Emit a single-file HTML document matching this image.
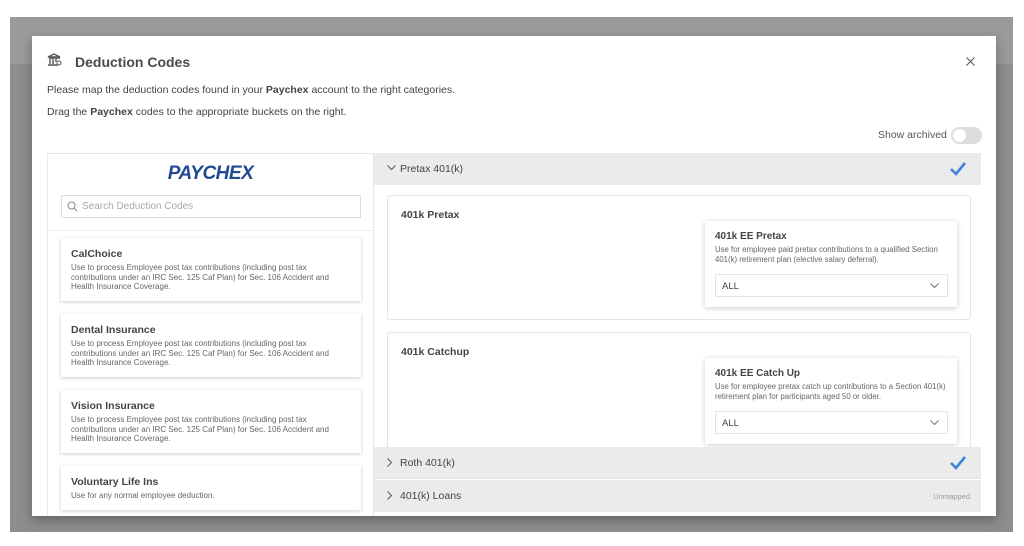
<!DOCTYPE html>
<html><head><style>
*{box-sizing:border-box;margin:0;padding:0}
body{width:1024px;height:546px;background:#fff;font-family:"Liberation Sans",sans-serif;position:relative;overflow:hidden;color:#333}
.bd{position:absolute;left:10px;top:17px;width:1003px;height:515px;background:#8d8d8d}
.bd .h{position:absolute;left:0;top:0;width:100%;height:47px;background:#9a9a9a}
.modal{position:absolute;left:32px;top:36px;width:964px;height:480px;background:#fff;overflow:hidden;box-shadow:0 4px 10px rgba(0,0,0,.3)}
.t{position:absolute;left:43px;top:18px;font-size:14px;font-weight:bold;color:#4a4a4a}
.p{position:absolute;left:15px;font-size:10.5px;color:#444}
.left{position:absolute;left:15px;top:117px;width:327px;height:370px;border:1px solid #e8e8e8;background:#fff}
.logo{position:absolute;left:0;width:100%;top:9px;text-align:center;font-size:19px;font-weight:900;font-style:italic;color:#1f4a91;letter-spacing:-0.5px}
.search{position:absolute;left:13px;top:41px;width:300px;height:23px;border:1px solid #ddd;font-size:10px;color:#aaa;padding:5px 0 0 20px}
.card{position:absolute;left:13px;width:300px;background:#fff;box-shadow:0 1px 4px rgba(0,0,0,.2);padding:10px 10px 0 10px}
.card b{display:block;font-size:10.5px;color:#444;margin-bottom:3px}
.card span{display:block;font-size:8px;line-height:9.5px;color:#666}
.right{position:absolute;left:342px;top:117px;width:607px;height:370px;background:#fff;overflow:hidden}
.hd{position:absolute;left:0;width:607px;height:32px;background:#ebebeb;font-size:10.5px;color:#444;padding:10px 0 0 26px}
.hd svg.cv{position:absolute;left:13px;top:12px}
.box{position:absolute;left:13px;width:584px;border:1px solid #e4e4e4;border-radius:3px;background:#fff}
.box>b{position:absolute;left:13px;top:13px;font-size:10.5px;color:#444}
.ic{position:absolute;left:317px;width:252px;background:#fff;box-shadow:0 1px 5px rgba(0,0,0,.2);padding:10px 8px 0 10px}
.ic b{display:block;font-size:10px;color:#444;margin-bottom:3px}
.ic span{display:block;font-size:7.8px;line-height:9.6px;color:#666}
.sel{position:absolute;left:10px;width:233px;height:23px;border:1px solid #e4e4e4;font-size:9.5px;color:#444;padding:6px 0 0 6px}
.sel svg{position:absolute;right:8px;top:8px}
.chk{position:absolute;right:14px;top:8px}
</style></head><body>
<div class="bd"><div class="h"></div></div>
<div class="modal">
<svg style="position:absolute;left:15px;top:17px" width="15" height="14" viewBox="0 0 15 14"><path d="M1 4L7 1L13 4Z M2 5h11 M3 6v5 M6 6v5 M9 6v3 M1 12h10" stroke="#555" stroke-width="1.4" fill="none"/><circle cx="12" cy="10" r="2" fill="none" stroke="#555"/></svg>
<div class="t">Deduction Codes</div>
<svg style="position:absolute;left:934px;top:21px" width="9" height="9"><path d="M0.5 0.5l8 8M8.5 0.5l-8 8" stroke="#555" stroke-width="1.1"/></svg>
<div class="p" style="top:48px">Please map the deduction codes found in your <b>Paychex</b> account to the right categories.</div>
<div class="p" style="top:70px">Drag the <b>Paychex</b> codes to the appropriate buckets on the right.</div>
<div class="p" style="left:846px;top:93px;color:#555">Show archived</div>
<div style="position:absolute;left:919px;top:91px;width:31px;height:17px;border-radius:9px;background:#ddd"><div style="position:absolute;left:2px;top:2px;width:13px;height:13px;border-radius:50%;background:#fff"></div></div>
<div class="left">
<div class="logo">PAYCHEX</div>
<div class="search"><svg style="position:absolute;left:5px;top:5px" width="11" height="11"><circle cx="4.5" cy="4.5" r="3.5" stroke="#888" fill="none"/><path d="M7 7l3 3" stroke="#888"/></svg>Search Deduction Codes</div>
<div style="position:absolute;left:0;top:76px;width:100%;height:1px;background:#eee"></div>
<div class="card" style="top:84px;height:63px"><b>CalChoice</b><span>Use to process Employee post tax contributions (including post tax contributions under an IRC Sec. 125 Caf Plan) for Sec. 106 Accident and Health Insurance Coverage.</span></div>
<div class="card" style="top:160px;height:63px"><b>Dental Insurance</b><span>Use to process Employee post tax contributions (including post tax contributions under an IRC Sec. 125 Caf Plan) for Sec. 106 Accident and Health Insurance Coverage.</span></div>
<div class="card" style="top:236px;height:63px"><b>Vision Insurance</b><span>Use to process Employee post tax contributions (including post tax contributions under an IRC Sec. 125 Caf Plan) for Sec. 106 Accident and Health Insurance Coverage.</span></div>
<div class="card" style="top:312px;height:44px"><b>Voluntary Life Ins</b><span>Use for any normal employee deduction.</span></div>
</div>
<div class="right">
<div class="hd" style="top:0"><svg class="cv" width="9" height="6"><path d="M0.5 0.5l4 4 4-4" stroke="#555" fill="none"/></svg>Pretax 401(k)<svg class="chk" width="18" height="15"><path d="M2 8l5 5L16 2" stroke="#3b82d8" stroke-width="2.6" fill="none"/></svg></div>
<div class="box" style="top:42px;height:125px"><b>401k Pretax</b>
<div class="ic" style="top:25px;height:86px"><b>401k EE Pretax</b><span>Use for employee paid pretax contributions to a qualified Section 401(k) retirement plan (elective salary deferral).</span><div class="sel" style="top:53px">ALL<svg width="9" height="6"><path d="M0.5 0.5l4 4 4-4" stroke="#777" fill="none"/></svg></div></div></div>
<div class="box" style="top:179px;height:140px"><b>401k Catchup</b>
<div class="ic" style="top:25px;height:86px"><b>401k EE Catch Up</b><span>Use for employee pretax catch up contributions to a Section 401(k) retirement plan for participants aged 50 or older.</span><div class="sel" style="top:53px">ALL<svg width="9" height="6"><path d="M0.5 0.5l4 4 4-4" stroke="#777" fill="none"/></svg></div></div></div>
<div class="hd" style="top:294px;border-bottom:1px solid #e0e0e0"><svg class="cv" style="top:11px" width="6" height="9"><path d="M0.5 0.5l4 4-4 4" stroke="#555" fill="none"/></svg>Roth 401(k)<svg class="chk" width="18" height="15"><path d="M2 8l5 5L16 2" stroke="#3b82d8" stroke-width="2.6" fill="none"/></svg></div>
<div class="hd" style="top:327px"><svg class="cv" style="top:11px" width="6" height="9"><path d="M0.5 0.5l4 4-4 4" stroke="#555" fill="none"/></svg>401(k) Loans<span style="position:absolute;right:11px;top:12px;font-size:7.5px;color:#999">Unmapped</span></div>
</div>
</div>
</body></html>
